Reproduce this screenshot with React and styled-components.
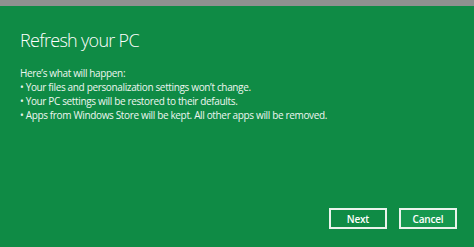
import React from "react";
import styled, { createGlobalStyle } from "styled-components";

const GlobalStyle = createGlobalStyle`
  html, body {
    margin: 0;
    padding: 0;
    background: #0f8b45;
  }
`;

const Screen = styled.div`
  width: 474px;
  height: 247px;
  box-sizing: border-box;
  background: #0f8b45;
  border-top: 6px solid #8f918f;
  display: flex;
  flex-direction: column;
  padding: 22px 17px 18px 20px;
  font-family: "Open Sans", "Noto Sans", sans-serif;
  color: #ffffff;
`;

const Title = styled.h1`
  margin: 0;
  font-size: 18px;
  font-weight: 300;
  line-height: 24px;
  letter-spacing: -0.7px;
`;

const Body = styled.div`
  margin-top: 14px;
  font-size: 10px;
  line-height: 14px;
  letter-spacing: -0.35px;
  color: #eef6f0;
`;

const Line = styled.div`
  white-space: nowrap;
`;

const Footer = styled.div`
  margin-top: auto;
  display: flex;
  justify-content: flex-end;
  gap: 12px;
`;

const Button = styled.button`
  width: 58px;
  height: 21px;
  box-sizing: border-box;
  border: 2px solid #eaf3ec;
  background: ${(p) => (p.$primary ? "#0f8b45" : "#16984f")};
  color: #ffffff;
  font-family: "Open Sans", "Noto Sans", sans-serif;
  font-size: 10px;
  font-weight: 600;
  letter-spacing: -0.2px;
  padding: 0;
  cursor: pointer;
`;

export default function App() {
  return (
    <>
      <GlobalStyle />
      <Screen>
        <Title>Refresh your PC</Title>
        <Body>
          <Line>Here’s what will happen:</Line>
          <Line>• Your files and personalization settings won’t change.</Line>
          <Line>• Your PC settings will be restored to their defaults.</Line>
          <Line>• Apps from Windows Store will be kept. All other apps will be removed.</Line>
        </Body>
        <Footer>
          <Button $primary>Next</Button>
          <Button>Cancel</Button>
        </Footer>
      </Screen>
    </>
  );
}
